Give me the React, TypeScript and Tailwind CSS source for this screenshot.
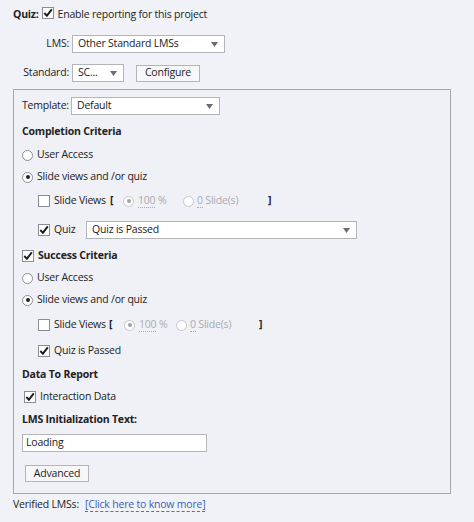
import React from 'react';

const font = { fontFamily: '"Open Sans", "Noto Sans", sans-serif' };

function Check({ checked = false }: { checked?: boolean }) {
  return (
    <span className="inline-flex h-[12px] w-[12px] shrink-0 items-center justify-center border border-[#8a8d94] bg-white">
      {checked && (
        <svg width="10" height="10" viewBox="0 0 10 10">
          <path d="M1.3 5 L3.9 7.7 L8.8 1.4" fill="none" stroke="#1d1d1d" strokeWidth="1.9" />
        </svg>
      )}
    </span>
  );
}

function Radio({ on = false, disabled = false }: { on?: boolean; disabled?: boolean }) {
  return (
    <span
      className={`inline-flex h-[11px] w-[11px] shrink-0 items-center justify-center rounded-full border bg-white ${
        disabled ? 'border-[#c4c6cc]' : 'border-[#8a8d94]'
      }`}
    >
      {on && <span className={`h-[4px] w-[4px] rounded-full ${disabled ? 'bg-[#a0a2a8]' : 'bg-[#222]'}`} />}
    </span>
  );
}

function Select({ value, w }: { value: string; w: string }) {
  return (
    <div className={`${w} flex h-[18px] items-center justify-between border border-[#b3b5bb] bg-white pl-[5px] pr-[6px]`}>
      <span>{value}</span>
      <svg width="7" height="5" viewBox="0 0 7 5">
        <path d="M0 0 H7 L3.5 5 Z" fill="#6b6d72" />
      </svg>
    </div>
  );
}

function Button({ label, w }: { label: string; w: string }) {
  return (
    <div className={`${w} flex h-[17px] items-center justify-center border border-[#b3b5bb] bg-[#f7f7f9]`}>
      {label}
    </div>
  );
}

function SlideViewsRow({ second = false }: { second?: boolean }) {
  return (
    <div className="flex h-[22px] items-center pl-[16px]">
      <Check />
      <span className={`ml-[4px] ${second ? 'w-[55px]' : 'w-[56px]'}`}>Slide Views</span>
      <span className={`font-bold ${second ? 'w-[15px]' : 'w-[13px]'}`}>[</span>
      <span className={`flex items-center text-[#a9abb0] ${second ? 'w-[52px]' : 'w-[60px]'}`}>
        <Radio on disabled />
        <span className="ml-[4px]">
          <span className="border-b border-dotted border-[#a9abb0] leading-[12px]">100</span> %
        </span>
      </span>
      <span className={`flex items-center text-[#a9abb0] ${second ? 'w-[83px]' : 'w-[85px]'}`}>
        <Radio disabled />
        <span className="ml-[3px]">
          <span className="border-b border-dotted border-[#a9abb0] leading-[12px]">0</span> Slide(s)
        </span>
      </span>
      <span className="font-bold">]</span>
    </div>
  );
}

export default function App() {
  return (
    <div className="h-[522px] w-[474px] bg-[#f1f2f7] text-[10.5px] tracking-[-0.2px] text-[#222]" style={font}>
      <div className="flex h-[30px] items-center pl-[13px]">
        <span className="font-bold">Quiz:</span>
        <span className="ml-[3px]">
          <Check checked />
        </span>
        <span className="ml-[4px]">Enable reporting for this project</span>
      </div>
      <div className="mt-[5px] flex h-[18px] items-center">
        <span className="w-[69px] text-right">LMS:</span>
        <span className="ml-[3px]">
          <Select value="Other Standard LMSs" w="w-[153px]" />
        </span>
      </div>
      <div className="mt-[11px] flex h-[18px] items-center">
        <span className="w-[69px] text-right">Standard:</span>
        <span className="ml-[3px]">
          <Select value="SC..." w="w-[52px]" />
        </span>
        <span className="ml-[12px]">
          <Button label="Configure" w="w-[64px]" />
        </span>
      </div>

      <div className="ml-[13px] mt-[7px] w-[438px] border border-[#a6a8ad] bg-[#f0f1f6] pb-[11px] pl-[8px] pt-[7px]">
        <div className="flex h-[18px] items-center">
          <span className="w-[49px]">Template:</span>
          <Select value="Default" w="w-[149px]" />
        </div>
        <div className="mt-[6px] flex h-[22px] items-center font-bold">Completion Criteria</div>
        <div className="mt-[1px] flex h-[22px] items-center">
          <Radio />
          <span className="ml-[4px]">User Access</span>
        </div>
        <div className="flex h-[22px] items-center">
          <Radio on />
          <span className="ml-[4px]">Slide views and /or quiz</span>
        </div>
        <div className="mt-[2px]">
          <SlideViewsRow />
        </div>
        <div className="mt-[7px] flex h-[22px] items-center pl-[16px]">
          <Check checked />
          <span className="ml-[4px] w-[32px]">Quiz</span>
          <Select value="Quiz is Passed" w="w-[271px]" />
        </div>
        <div className="mt-[4px] flex h-[22px] items-center">
          <Check checked />
          <span className="ml-[4px] font-bold">Success Criteria</span>
        </div>
        <div className="flex h-[22px] items-center">
          <Radio />
          <span className="ml-[4px]">User Access</span>
        </div>
        <div className="flex h-[22px] items-center">
          <Radio on />
          <span className="ml-[4px]">Slide views and /or quiz</span>
        </div>
        <div className="mt-[3px]">
          <SlideViewsRow second />
        </div>
        <div className="mt-[4px] flex h-[22px] items-center pl-[16px]">
          <Check checked />
          <span className="ml-[4px]">Quiz is Passed</span>
        </div>
        <div className="mt-[2px] flex h-[22px] items-center font-bold">Data To Report</div>
        <div className="flex h-[22px] items-center pl-[2px]">
          <Check checked />
          <span className="ml-[4px]">Interaction Data</span>
        </div>
        <div className="mt-[1px] flex h-[22px] items-center font-bold">LMS Initialization Text:</div>
        <div className="mt-[3px] flex h-[18px] w-[185px] items-center border border-[#b3b5bb] bg-white pl-[3px]">
          Loading
        </div>
        <div className="ml-[3px] mt-[13px]">
          <Button label="Advanced" w="w-[64px]" />
        </div>
      </div>

      <div className="flex h-[22px] items-center pl-[13px]">
        <span>Verified LMSs:</span>
        <span className="ml-[6px] border-b border-dashed border-[#4a6fbf] leading-[13px] text-[#3b5fb5]">
          [Click here to know more]
        </span>
      </div>
    </div>
  );
}
